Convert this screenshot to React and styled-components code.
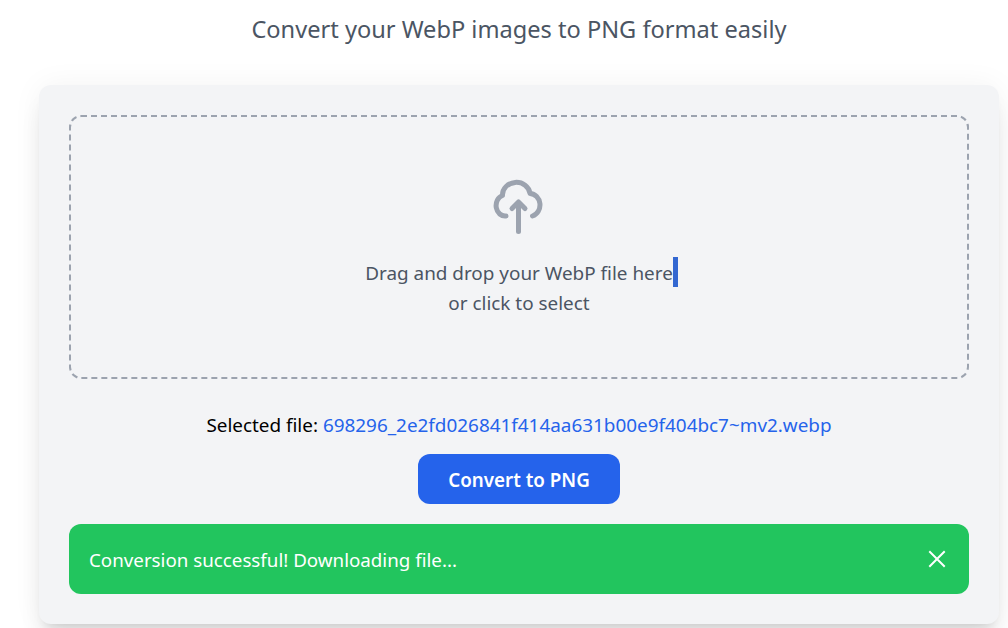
import React from 'react'
import styled, { createGlobalStyle } from 'styled-components'

const GlobalStyle = createGlobalStyle`
    html, body {
        margin: 0;
        padding: 0;
        height: 100%;
        overflow: hidden;
        background-color: #fff;
    }
    body {
        font-family: "Noto Sans", "Open Sans", sans-serif;
    }
`

const Page = styled.div`
    width: 960px;
    margin-left: 39px;
`

const Subtitle = styled.p`
    margin: 0;
    height: 85px;
    padding-top: 11px;
    box-sizing: border-box;
    text-align: center;
    font-size: 23.6px;
    line-height: 36px;
    color: #4b5563;
`

const Card = styled.main`
    display: flex;
    flex-direction: column;
    align-items: center;
    box-sizing: border-box;
    height: 539px;
    padding: 30px;
    background-color: #f3f4f6;
    border-radius: 12px;
    box-shadow: 0 20px 25px -5px rgba(0, 0, 0, 0.1), 0 8px 10px -6px rgba(0, 0, 0, 0.1), 0 0 30px rgba(0, 0, 0, 0.05);
`

const DropZone = styled.div`
    display: flex;
    flex-direction: column;
    align-items: center;
    box-sizing: border-box;
    width: 900px;
    height: 264px;
    padding-top: 55px;
    border: 2px dashed #9ca3af;
    border-radius: 12px;
`

const CloudIcon = styled.svg`
    display: block;
    width: 68px;
    height: 68px;
    margin-bottom: 18px;
    color: #9ca3af;
`

const DropText = styled.p`
    margin: 0;
    text-align: center;
    font-size: 18.9px;
    line-height: 30px;
    color: #4b5563;
`

const SelectedNewline = styled.span`
    display: inline-block;
    width: 5px;
    height: 30px;
    margin-right: -5px;
    margin-top: -1px;
    vertical-align: top;
    background-color: #3367d1;
`

const FileLine = styled.p`
    margin: 31px 0 0;
    font-size: 18.9px;
    line-height: 30px;
    color: #000;
`

const FileName = styled.span`
    color: #2563eb;
`

const ConvertButton = styled.button`
    width: 202px;
    height: 50px;
    margin-top: 14px;
    padding: 2px 0 0;
    border: none;
    border-radius: 12px;
    background-color: #2563eb;
    color: #fff;
    font-family: inherit;
    font-size: 18.8px;
    font-weight: 600;
    cursor: pointer;
`

const Alert = styled.div`
    display: flex;
    align-items: center;
    justify-content: space-between;
    box-sizing: border-box;
    width: 900px;
    height: 70px;
    margin-top: 20px;
    padding: 0 20px;
    border-radius: 12px;
    background-color: #22c55e;
    color: #fff;
    font-size: 18.75px;
`

const CloseButton = styled.button`
    display: flex;
    padding: 0;
    border: none;
    background: none;
    color: #fff;
    cursor: pointer;
`

const App = () => {
    return (
        <Page>
            <GlobalStyle />
            <Subtitle>Convert your WebP images to PNG format easily</Subtitle>
            <Card>
                <DropZone>
                    <CloudIcon viewBox="0 0 68 68" fill="none" stroke="currentColor" strokeWidth="5" strokeLinecap="round" strokeLinejoin="round">
                        <path d="M21 44A9 10.5 0 0 1 17.5 23.5A13.8 12.5 0 0 1 45 21.5A10.5 11.5 0 0 1 47.5 44" />
                        <path d="M33.5 59.5V31" />
                        <path d="M27 36.5L33.5 30L40 36.5" />
                    </CloudIcon>
                    <DropText>
                        Drag and drop your WebP file here<SelectedNewline />
                        <br />
                        or click to select
                    </DropText>
                </DropZone>
                <FileLine>
                    Selected file: <FileName>698296_2e2fd026841f414aa631b00e9f404bc7~mv2.webp</FileName>
                </FileLine>
                <ConvertButton>Convert to PNG</ConvertButton>
                <Alert>
                    <span>Conversion successful! Downloading file...</span>
                    <CloseButton aria-label="Close">
                        <svg width="24" height="24" viewBox="0 0 24 24" fill="none" stroke="currentColor" strokeWidth="2" strokeLinecap="square">
                            <path d="M5 5L19 19M19 5L5 19" />
                        </svg>
                    </CloseButton>
                </Alert>
            </Card>
        </Page>
    )
}

export default App
